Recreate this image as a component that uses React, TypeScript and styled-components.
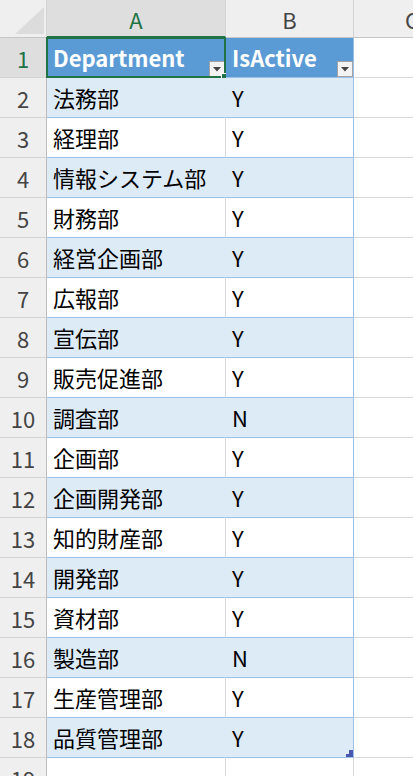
import React from "react";
import styled, { createGlobalStyle, css } from "styled-components";

const GlobalStyle = createGlobalStyle`
  html, body {
    margin: 0;
    padding: 0;
    background: #ffffff;
    overflow: hidden;
  }
  * { box-sizing: border-box; }
`;

const GREEN = "#217346";
const FONT = `"Noto Sans CJK JP", "Noto Sans", sans-serif`;

const Sheet = styled.div`
  width: 413px;
  height: 776px;
  overflow: hidden;
  display: flex;
  flex-direction: column;
  font-family: ${FONT};
  background: #ffffff;
`;

const Row = styled.div<{ $head?: boolean }>`
  display: grid;
  grid-template-columns: 47px 179px 128px 59px;
  height: ${(p) => (p.$head ? 38 : 40)}px;
  flex: none;
`;

const Corner = styled.div`
  position: relative;
  background: #efefef;
  border-right: 1px solid #d4d4d4;
  border-bottom: 1px solid #c6c6c6;
  &::after {
    content: "";
    position: absolute;
    left: 15px;
    top: 7px;
    width: 29px;
    height: 27px;
    background: #dcdcdc;
    clip-path: polygon(100% 0, 100% 100%, 0 100%);
  }
`;

const ColHead = styled.div<{ $sel?: boolean }>`
  display: flex;
  align-items: center;
  justify-content: center;
  font-size: 22px;
  padding-top: 1px;
  color: ${(p) => (p.$sel ? GREEN : "#444444")};
  background: ${(p) => (p.$sel ? "#dedede" : "#efefef")};
  border-right: 1px solid #d4d4d4;
  border-bottom: ${(p) => (p.$sel ? `2px solid ${GREEN}` : "1px solid #c6c6c6")};
  white-space: nowrap;
  overflow: hidden;
`;

const ColHeadCut = styled(ColHead)`
  justify-content: flex-start;
  padding-left: 51px;
  border-right: none;
`;

const RowHead = styled.div<{ $sel?: boolean }>`
  display: flex;
  align-items: center;
  justify-content: center;
  font-size: 22px;
  color: ${(p) => (p.$sel ? GREEN : "#444444")};
  background: ${(p) => (p.$sel ? "#dedede" : "#efefef")};
  border-right: 1px solid #bcbcbc;
  border-bottom: 1px solid #d4d4d4;
`;

type Band = "header" | "blue" | "white" | "plain";

const fills: Record<Band, string> = {
  header: "#5b9bd5",
  blue: "#ddebf7",
  white: "#ffffff",
  plain: "#ffffff",
};

const Cell = styled.div<{ $band: Band; $edge?: "inner" | "tableEnd" | "free" }>`
  position: relative;
  display: flex;
  align-items: center;
  padding-left: 6px;
  padding-bottom: 1px;
  font-size: 22px;
  color: #000000;
  white-space: nowrap;
  background: ${(p) => fills[p.$band]};
  border-bottom: 1px solid
    ${(p) => (p.$band === "plain" ? "#dadada" : "#9bc2e6")};
  ${(p) =>
    p.$edge === "inner" &&
    css`
      border-right: 1px solid
        ${p.$band === "header"
          ? "#5b9bd5"
          : p.$band === "blue"
          ? "#ddebf7"
          : "#d9d9d9"};
    `}
  ${(p) =>
    p.$edge === "tableEnd" &&
    css`
      border-right: 1px solid
        ${p.$band === "plain" ? "#d9d9d9" : "#9bc2e6"};
    `}
  ${(p) =>
    p.$band === "header" &&
    css`
      color: #ffffff;
      font-weight: 700;
      font-size: 22px;
    `}
`;

const FilterButton = styled.div`
  position: absolute;
  right: 0;
  bottom: 0;
  width: 16px;
  height: 16px;
  background: #f3f3f3;
  border: 1px solid #a3a3a3;
  display: flex;
  align-items: center;
  justify-content: center;
`;

const Selection = styled.div`
  position: absolute;
  left: -1px;
  top: -1px;
  width: 180px;
  height: 41px;
  border: 2px solid ${GREEN};
  pointer-events: none;
`;

const FillHandle = styled.div`
  position: absolute;
  right: -4px;
  bottom: -4px;
  width: 7px;
  height: 7px;
  background: ${GREEN};
  border-left: 1px solid #ffffff;
  border-top: 1px solid #ffffff;
`;

const ResizeGrip = styled.svg`
  position: absolute;
  right: 0;
  bottom: 0;
`;

const Arrow = () => (
  <svg width="8" height="5" viewBox="0 0 8 5">
    <polygon points="0,0 8,0 4,4.5" fill="#444" />
  </svg>
);

const data: [string, string][] = [
  ["法務部", "Y"],
  ["経理部", "Y"],
  ["情報システム部", "Y"],
  ["財務部", "Y"],
  ["経営企画部", "Y"],
  ["広報部", "Y"],
  ["宣伝部", "Y"],
  ["販売促進部", "Y"],
  ["調査部", "N"],
  ["企画部", "Y"],
  ["企画開発部", "Y"],
  ["知的財産部", "Y"],
  ["開発部", "Y"],
  ["資材部", "Y"],
  ["製造部", "N"],
  ["生産管理部", "Y"],
  ["品質管理部", "Y"],
];

export default function App() {
  return (
    <>
      <GlobalStyle />
      <Sheet>
        <Row $head>
          <Corner />
          <ColHead $sel>A</ColHead>
          <ColHead>B</ColHead>
          <ColHeadCut>C</ColHeadCut>
        </Row>
        <Row>
          <RowHead $sel>1</RowHead>
          <Cell $band="header" $edge="inner">
            Department
            <FilterButton>
              <Arrow />
            </FilterButton>
            <Selection>
              <FillHandle />
            </Selection>
          </Cell>
          <Cell $band="header" $edge="tableEnd">
            IsActive
            <FilterButton>
              <Arrow />
            </FilterButton>
          </Cell>
          <Cell $band="plain" />
        </Row>
        {data.map(([dept, active], i) => {
          const band: Band = i % 2 === 0 ? "blue" : "white";
          const last = i === data.length - 1;
          return (
            <Row key={i}>
              <RowHead>{i + 2}</RowHead>
              <Cell $band={band} $edge="inner">
                {dept}
              </Cell>
              <Cell $band={band} $edge="tableEnd">
                {active}
                {last && (
                  <ResizeGrip width="7" height="7" viewBox="0 0 7 7">
                    <polygon points="7,0 7,7 0,7 0,4 3,4 3,0" fill="#4a56b0" />
                  </ResizeGrip>
                )}
              </Cell>
              <Cell $band="plain" />
            </Row>
          );
        })}
        <Row>
          <RowHead>19</RowHead>
          <Cell $band="plain" $edge="inner" />
          <Cell $band="plain" $edge="tableEnd" />
          <Cell $band="plain" />
        </Row>
      </Sheet>
    </>
  );
}
